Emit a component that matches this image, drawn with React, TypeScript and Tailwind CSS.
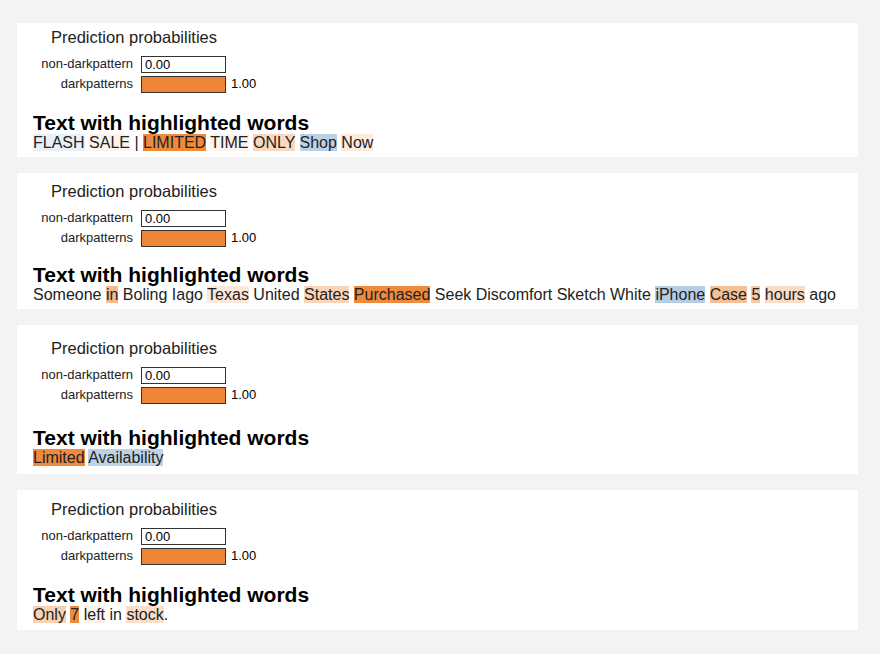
type Word = { t: string; bg?: string };

type Example = {
  words: Word[];
  pt: number;
  gap: number;
  pb: number;
};

const examples: Example[] = [
  {
    pt: 5,
    gap: 18,
    pb: 5,
    words: [
      { t: "FLASH", bg: "#e9f0f7" },
      { t: "SALE", bg: "#fdf3ec" },
      { t: "|" },
      { t: "LIMITED", bg: "#ef8a3c" },
      { t: "TIME", bg: "#fdf3ec" },
      { t: "ONLY", bg: "#f9d8bf" },
      { t: "Shop", bg: "#bdd1e6" },
      { t: "Now", bg: "#fbeadd" },
    ],
  },
  {
    pt: 9,
    gap: 16,
    pb: 5,
    words: [
      { t: "Someone" },
      { t: "in", bg: "#f5b98b" },
      { t: "Boling" },
      { t: "Iago" },
      { t: "Texas", bg: "#fce7d8" },
      { t: "United" },
      { t: "States", bg: "#f9d4b7" },
      { t: "Purchased", bg: "#ef8a3c" },
      { t: "Seek" },
      { t: "Discomfort" },
      { t: "Sketch" },
      { t: "White" },
      { t: "iPhone", bg: "#b7cde4" },
      { t: "Case", bg: "#f5c097" },
      { t: "5", bg: "#f7c8a5" },
      { t: "hours", bg: "#fadcc6" },
      { t: "ago" },
    ],
  },
  {
    pt: 14,
    gap: 22,
    pb: 7,
    words: [
      { t: "Limited", bg: "#ef8a3c" },
      { t: "Availability", bg: "#bdd2e7" },
    ],
  },
  {
    pt: 10,
    gap: 18,
    pb: 6,
    words: [
      { t: "Only", bg: "#f8d2b4" },
      { t: "7", bg: "#ef8a3c" },
      { t: "left", bg: "#fdf1e8" },
      { t: "in" },
      { t: "stock", bg: "#fbdfca" },
      { t: "." },
    ],
  },
];

const ProbRow = ({
  label,
  value,
  filled,
}: {
  label: string;
  value: string;
  filled?: boolean;
}) => (
  <div className="flex items-center h-[20px]">
    <div className="w-[116px] text-right text-[13px] text-[#222]">{label}</div>
    <div
      className={`ml-[8px] w-[85px] h-[17px] border border-[#333] flex items-center ${
        filled ? "bg-[#ef8637]" : "bg-white"
      }`}
    >
      {!filled && (
        <span className="pl-[3px] text-[13px] leading-none text-black">{value}</span>
      )}
    </div>
    {filled && <span className="ml-[5px] text-[13px] text-black">{value}</span>}
  </div>
);

const Card = ({ ex }: { ex: Example }) => (
  <section
    className="bg-white w-[841px]"
    style={{
      paddingTop: ex.pt,
      paddingBottom: ex.pb,
      fontFamily: "'Liberation Sans', Arial, sans-serif",
    }}
  >
    <div className="pl-[34px] text-[16.5px] leading-[18px] text-[#222]">
      Prediction probabilities
    </div>
    <div className="mt-[8px] flex flex-col">
      <ProbRow label="non-darkpattern" value="0.00" />
      <ProbRow label="darkpatterns" value="1.00" filled />
    </div>
    <div style={{ marginTop: ex.gap }} className="pl-[16px]">
      <h3 className="text-[21px] leading-[22px] font-bold text-black">
        Text with highlighted words
      </h3>
      <p className="text-[16px] leading-[18px] text-[#222]">
        {ex.words.map((w, i) => (
          <span key={i}>
            {i > 0 && w.t !== "." ? " " : ""}
            <span style={w.bg ? { backgroundColor: w.bg } : undefined}>{w.t}</span>
          </span>
        ))}
      </p>
    </div>
  </section>
);

export default function App() {
  return (
    <div className="min-h-screen bg-[#f3f3f3] pt-[23px] pl-[17px] pb-[24px]">
      <div className="flex flex-col gap-[16px]">
        {examples.map((ex, i) => (
          <Card key={i} ex={ex} />
        ))}
      </div>
    </div>
  );
}
